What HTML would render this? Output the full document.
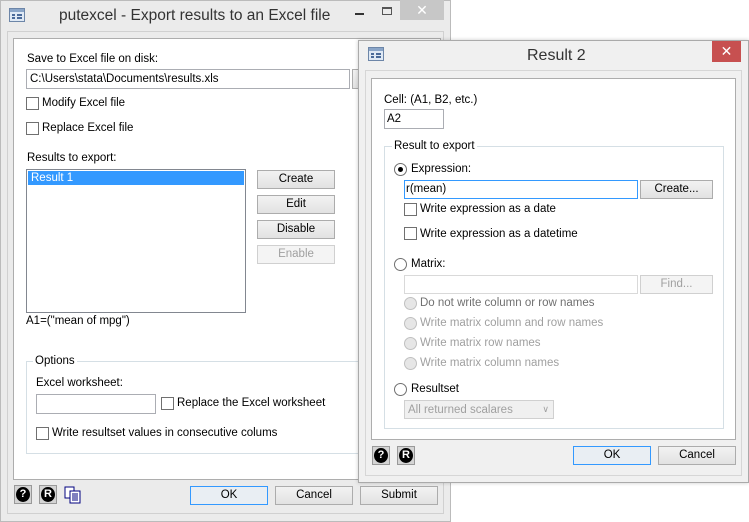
<!DOCTYPE html>
<html><head><style>
*{box-sizing:border-box;margin:0;padding:0}
body{width:749px;height:522px;position:relative;background:#fff;font-family:"Liberation Sans",sans-serif;font-size:11.5px;color:#000;overflow:hidden}
.a{position:absolute}
.t{position:absolute;white-space:nowrap;line-height:13px}
.f{position:absolute;background:#fff;border:1px solid #abadb3}
.b{position:absolute;background:linear-gradient(#f2f2f2,#e2e2e2);border:1px solid #acacac;text-align:center;line-height:16px}
.cb{position:absolute;width:13px;height:13px;border:1px solid #707070;background:#fff}
.rd{position:absolute;width:13px;height:13px;border:1px solid #707070;border-radius:50%;background:#fff}
.dis{color:#a0a0a0}
.rd.d{background:#e6e6e6;border-color:#c0c0c0}
.ic{position:absolute;width:18px;height:19px;background:#d4d4d4;border:1px solid #999}
.ic span{position:absolute;left:1px;top:1px;width:14px;height:15px;border-radius:50%;background:#000;color:#fff;font-weight:bold;font-size:11px;text-align:center;line-height:15px}
</style></head><body>
<!-- left window -->
<div class="a" style="left:0;top:0;width:451px;height:522px;background:#ebebeb;border:1px solid #bbb"></div>
<svg class="a" style="left:9px;top:8px" width="16" height="14"><rect x=".5" y=".5" width="15" height="13" fill="#dfe9f5" stroke="#6d86a8"/><rect x="1" y="1" width="14" height="3" fill="#8aa5c8"/><rect x="3" y="6" width="3" height="2" fill="#4a6a9a"/><rect x="8" y="6" width="5" height="2" fill="#4a6a9a"/><rect x="3" y="9" width="3" height="2" fill="#4a6a9a"/><rect x="8" y="9" width="5" height="2" fill="#4a6a9a"/></svg>
<div class="t" style="left:59px;top:6px;font-size:15.5px;line-height:20px;color:#333">putexcel - Export results to an Excel file</div>
<div class="a" style="left:355px;top:13px;width:9px;height:2px;background:#333"></div>
<div class="a" style="left:382px;top:7px;width:10px;height:8px;border:1px solid #555;border-top-width:2px"></div>
<div class="a" style="left:400px;top:0;width:44px;height:20px;background:#c7c7c7;color:#fff;text-align:center;font-size:14px;line-height:20px">✕</div>
<div class="a" style="left:7px;top:31px;width:437px;height:483px;border:1px solid #d0d0d0"></div>
<div class="a" style="left:13px;top:38px;width:428px;height:442px;background:#fff;border:1px solid #adadad"></div>
<div class="t" style="left:27px;top:53px">Save to Excel file on disk:</div>
<div class="f" style="left:26px;top:69px;width:324px;height:20px"><div class="t" style="left:3px;top:3px">C:\Users\stata\Documents\results.xls</div></div>
<div class="b" style="left:352px;top:69px;width:10px;height:20px"></div>
<div class="cb" style="left:26px;top:97px"></div><div class="t" style="left:42px;top:97px">Modify Excel file</div>
<div class="cb" style="left:26px;top:122px"></div><div class="t" style="left:42px;top:122px">Replace Excel file</div>
<div class="t" style="left:27px;top:152px">Results to export:</div>
<div class="f" style="left:26px;top:169px;width:220px;height:144px;border-color:#828790"><div class="a" style="left:1px;top:1px;width:216px;height:14px;background:#3399ff;color:#fff;padding-left:3px;line-height:14px">Result 1</div></div>
<div class="b" style="left:257px;top:170px;width:78px;height:19px">Create</div>
<div class="b" style="left:257px;top:195px;width:78px;height:19px">Edit</div>
<div class="b" style="left:257px;top:220px;width:78px;height:19px">Disable</div>
<div class="b dis" style="left:257px;top:245px;width:78px;height:19px;background:#f4f4f4;border-color:#d0d0d0">Enable</div>
<div class="t" style="left:26px;top:315px">A1=("mean of mpg")</div>
<div class="a" style="left:26px;top:361px;width:340px;height:93px;border:1px solid #d5dfe5"></div>
<div class="t" style="left:33px;top:355px;background:#fff;padding:0 2px">Options</div>
<div class="t" style="left:36px;top:377px">Excel worksheet:</div>
<div class="f" style="left:36px;top:394px;width:120px;height:20px"></div>
<div class="cb" style="left:161px;top:397px"></div><div class="t" style="left:177px;top:397px">Replace the Excel worksheet</div>
<div class="cb" style="left:36px;top:427px"></div><div class="t" style="left:52px;top:427px">Write resultset values in consecutive colums</div>
<div class="ic" style="left:14px;top:485px"><span>?</span></div>
<div class="ic" style="left:39px;top:485px"><span>R</span></div>
<svg class="a" style="left:64px;top:486px" width="18" height="18"><rect x="1" y="1" width="9" height="11" fill="#fff" stroke="#00007f"/><rect x="6" y="5" width="10" height="12" fill="#fff" stroke="#00007f"/><path d="M8 8h6M8 10h6M8 12h6M8 14h6" stroke="#00007f"/></svg>
<div class="b" style="left:190px;top:486px;width:78px;height:19px;border-color:#3399ff;background:#e9eef3">OK</div>
<div class="b" style="left:275px;top:486px;width:78px;height:19px">Cancel</div>
<div class="b" style="left:360px;top:486px;width:78px;height:19px">Submit</div>

<!-- right window -->
<div class="a" style="left:358px;top:40px;width:391px;height:443px;background:#f0f0f0;border:1px solid #aaa;box-shadow:0 0 4px rgba(0,0,0,.2)"></div>
<svg class="a" style="left:368px;top:47px" width="16" height="14"><rect x=".5" y=".5" width="15" height="13" fill="#dfe9f5" stroke="#6d86a8"/><rect x="1" y="1" width="14" height="3" fill="#8aa5c8"/><rect x="3" y="6" width="3" height="2" fill="#4a6a9a"/><rect x="8" y="6" width="5" height="2" fill="#4a6a9a"/><rect x="3" y="9" width="3" height="2" fill="#4a6a9a"/><rect x="8" y="9" width="5" height="2" fill="#4a6a9a"/></svg>
<div class="t" style="left:527px;top:46px;font-size:16px;line-height:20px;color:#333">Result 2</div>
<div class="a" style="left:712px;top:41px;width:29px;height:21px;background:#c75050;color:#fff;text-align:center;font-size:14px;line-height:21px">✕</div>
<div class="a" style="left:365px;top:70px;width:377px;height:406px;border:1px solid #d6d6d6"></div>
<div class="a" style="left:371px;top:78px;width:365px;height:362px;background:#fff;border:1px solid #adadad"></div>
<div class="t" style="left:384px;top:94px">Cell: (A1, B2, etc.)</div>
<div class="f" style="left:384px;top:109px;width:60px;height:20px"><div class="t" style="left:2px;top:3px">A2</div></div>
<div class="a" style="left:384px;top:146px;width:340px;height:283px;border:1px solid #d5dfe5"></div>
<div class="t" style="left:392px;top:140px;background:#fff;padding:0 2px">Result to export</div>
<div class="rd" style="left:394px;top:163px"><div class="a" style="left:3px;top:3px;width:5px;height:5px;border-radius:50%;background:#000"></div></div>
<div class="t" style="left:411px;top:163px">Expression:</div>
<div class="f" style="left:404px;top:180px;width:234px;height:19px;border-color:#3399ff"><div class="t" style="left:1px;top:2px">r(mean)</div></div>
<div class="b" style="left:640px;top:180px;width:73px;height:19px">Create...</div>
<div class="cb" style="left:404px;top:203px"></div><div class="t" style="left:420px;top:203px">Write expression as a date</div>
<div class="cb" style="left:404px;top:227px"></div><div class="t" style="left:420px;top:228px">Write expression as a datetime</div>
<div class="rd" style="left:394px;top:258px"></div><div class="t" style="left:411px;top:258px">Matrix:</div>
<div class="f" style="left:404px;top:275px;width:234px;height:19px;border-color:#d9d9d9"></div>
<div class="b dis" style="left:640px;top:275px;width:73px;height:19px;background:#f4f4f4;border-color:#d0d0d0">Find...</div>
<div class="rd d" style="left:404px;top:297px"></div><div class="t" style="left:420px;top:297px;color:#707070">Do not write column or row names</div>
<div class="rd d" style="left:404px;top:317px"></div><div class="t dis" style="left:420px;top:317px">Write matrix column and row names</div>
<div class="rd d" style="left:404px;top:337px"></div><div class="t dis" style="left:420px;top:337px">Write matrix row names</div>
<div class="rd d" style="left:404px;top:357px"></div><div class="t dis" style="left:420px;top:357px">Write matrix column names</div>
<div class="rd" style="left:394px;top:383px"></div><div class="t" style="left:411px;top:383px">Resultset</div>
<div class="a dis" style="left:404px;top:400px;width:150px;height:19px;background:#f0f0f0;border:1px solid #d0d0d0;padding:3px 0 0 3px;line-height:13px">All returned scalares<span style="position:absolute;right:4px;top:2px;font-size:9px">∨</span></div>
<div class="ic" style="left:372px;top:446px"><span>?</span></div>
<div class="ic" style="left:397px;top:446px"><span>R</span></div>
<div class="b" style="left:573px;top:446px;width:78px;height:19px;border-color:#3399ff;background:#e9eef3">OK</div>
<div class="b" style="left:658px;top:446px;width:78px;height:19px">Cancel</div>
</body></html>
